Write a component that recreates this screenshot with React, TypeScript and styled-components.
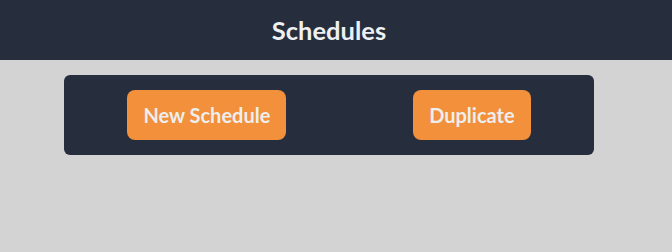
import React from 'react';
import styled, { createGlobalStyle } from 'styled-components';

const GlobalStyle = createGlobalStyle`
  body {
    margin: 0;
    background: #d3d3d3;
    font-family: Lato, "Noto Sans", sans-serif;
  }
`;

const Header = styled.header`
  height: 60px;
  padding-right: 14px;
  background: #262d3d;
  display: flex;
  align-items: center;
  justify-content: center;
`;

const Title = styled.h1`
  margin: 0;
  font-size: 25.5px;
  font-weight: 700;
  color: #eef0f2;
`;

const Panel = styled.div`
  width: 530px;
  height: 80px;
  margin: 15px 0 0 64px;
  background: #262d3d;
  border-radius: 6px;
  display: flex;
  align-items: center;
  justify-content: space-around;
`;

const Button = styled.button`
  height: 50px;
  padding: 0 16px;
  border: none;
  border-radius: 8px;
  background: #f2903b;
  color: #eeeeee;
  font-family: inherit;
  font-size: 20px;
  font-weight: 700;
  cursor: pointer;
`;

export default function App() {
  return (
    <>
      <GlobalStyle />
      <Header>
        <Title>Schedules</Title>
      </Header>
      <Panel>
        <Button>New Schedule</Button>
        <Button>Duplicate</Button>
      </Panel>
    </>
  );
}
